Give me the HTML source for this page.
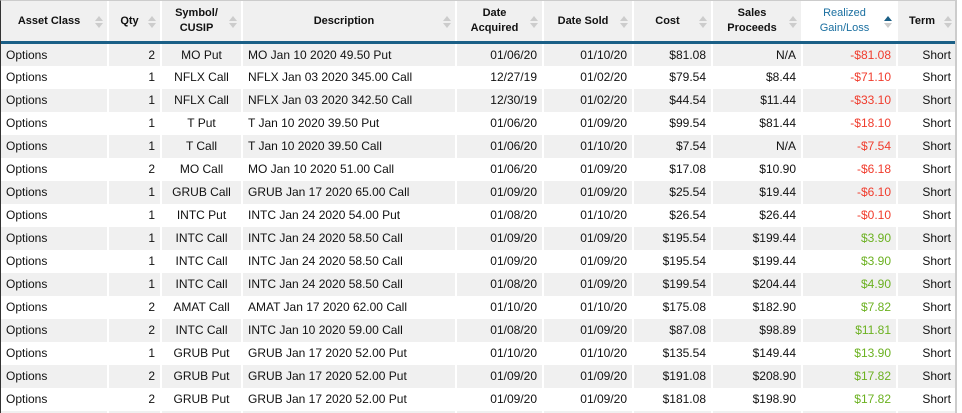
<!DOCTYPE html>
<html><head><style>
body{margin:0;background:#fff;font-family:"Liberation Sans",Arial,sans-serif;font-size:12px;color:#111}
.wrap{position:absolute;left:0;top:0;width:957px;height:413px;border-left:1px solid #333;border-top:1px solid #ccc;border-right:2px solid #ccc;overflow:hidden;box-sizing:border-box}
table{border-collapse:collapse;table-layout:fixed;width:956px}
th{background:#f0f0f0;height:40px;font-weight:bold;font-size:11px;line-height:15px;border-right:2px solid #fff;border-bottom:3px solid #1a5f86;position:relative;padding:0 14px 0 4px}
th.act{background:#fff;color:#1a6fa0;font-weight:normal}
th .s{position:absolute;right:8px;top:15px;width:0;height:0}
th .s:before{content:"";position:absolute;left:-4px;top:0;border:4px solid transparent;border-bottom:5px solid #ccc;border-top:0}
th .s:after{content:"";position:absolute;left:-4px;top:7px;border:4px solid transparent;border-top:5px solid #ccc;border-bottom:0}
th.act .s:before{border-bottom-color:#1a5f86}
td{height:23px;padding:0 5px;border-right:2px solid #fff;white-space:nowrap;box-sizing:border-box}
tr:nth-child(odd) td{background:#f0f0f0}
.r{text-align:right}.c{text-align:center}
.n{color:#f03b2c}.p{color:#6bb120}
</style></head><body><div class="wrap"><table>
<colgroup><col style="width:107px"><col style="width:53px"><col style="width:81px"><col style="width:214px"><col style="width:87px"><col style="width:90px"><col style="width:79px"><col style="width:90px"><col style="width:95px"><col style="width:60px"></colgroup>
<thead><tr>
<th>Asset Class<span class="s"></span></th><th>Qty<span class="s"></span></th><th>Symbol/<br>CUSIP<span class="s"></span></th><th>Description<span class="s"></span></th><th>Date<br>Acquired<span class="s"></span></th><th>Date Sold<span class="s"></span></th><th>Cost<span class="s"></span></th><th>Sales<br>Proceeds<span class="s"></span></th><th class="act">Realized<br>Gain/Loss<span class="s"></span></th><th>Term<span class="s"></span></th>
</tr></thead>
<tbody>
<tr><td>Options</td><td class="r">2</td><td class="c">MO Put</td><td>MO Jan 10 2020 49.50 Put</td><td class="r">01/06/20</td><td class="r">01/10/20</td><td class="r">$81.08</td><td class="r">N/A</td><td class="r n">-$81.08</td><td class="r">Short</td></tr>
<tr><td>Options</td><td class="r">1</td><td class="c">NFLX Call</td><td>NFLX Jan 03 2020 345.00 Call</td><td class="r">12/27/19</td><td class="r">01/02/20</td><td class="r">$79.54</td><td class="r">$8.44</td><td class="r n">-$71.10</td><td class="r">Short</td></tr>
<tr><td>Options</td><td class="r">1</td><td class="c">NFLX Call</td><td>NFLX Jan 03 2020 342.50 Call</td><td class="r">12/30/19</td><td class="r">01/02/20</td><td class="r">$44.54</td><td class="r">$11.44</td><td class="r n">-$33.10</td><td class="r">Short</td></tr>
<tr><td>Options</td><td class="r">1</td><td class="c">T Put</td><td>T Jan 10 2020 39.50 Put</td><td class="r">01/06/20</td><td class="r">01/09/20</td><td class="r">$99.54</td><td class="r">$81.44</td><td class="r n">-$18.10</td><td class="r">Short</td></tr>
<tr><td>Options</td><td class="r">1</td><td class="c">T Call</td><td>T Jan 10 2020 39.50 Call</td><td class="r">01/06/20</td><td class="r">01/10/20</td><td class="r">$7.54</td><td class="r">N/A</td><td class="r n">-$7.54</td><td class="r">Short</td></tr>
<tr><td>Options</td><td class="r">2</td><td class="c">MO Call</td><td>MO Jan 10 2020 51.00 Call</td><td class="r">01/06/20</td><td class="r">01/09/20</td><td class="r">$17.08</td><td class="r">$10.90</td><td class="r n">-$6.18</td><td class="r">Short</td></tr>
<tr><td>Options</td><td class="r">1</td><td class="c">GRUB Call</td><td>GRUB Jan 17 2020 65.00 Call</td><td class="r">01/09/20</td><td class="r">01/09/20</td><td class="r">$25.54</td><td class="r">$19.44</td><td class="r n">-$6.10</td><td class="r">Short</td></tr>
<tr><td>Options</td><td class="r">1</td><td class="c">INTC Put</td><td>INTC Jan 24 2020 54.00 Put</td><td class="r">01/08/20</td><td class="r">01/10/20</td><td class="r">$26.54</td><td class="r">$26.44</td><td class="r n">-$0.10</td><td class="r">Short</td></tr>
<tr><td>Options</td><td class="r">1</td><td class="c">INTC Call</td><td>INTC Jan 24 2020 58.50 Call</td><td class="r">01/09/20</td><td class="r">01/09/20</td><td class="r">$195.54</td><td class="r">$199.44</td><td class="r p">$3.90</td><td class="r">Short</td></tr>
<tr><td>Options</td><td class="r">1</td><td class="c">INTC Call</td><td>INTC Jan 24 2020 58.50 Call</td><td class="r">01/09/20</td><td class="r">01/09/20</td><td class="r">$195.54</td><td class="r">$199.44</td><td class="r p">$3.90</td><td class="r">Short</td></tr>
<tr><td>Options</td><td class="r">1</td><td class="c">INTC Call</td><td>INTC Jan 24 2020 58.50 Call</td><td class="r">01/08/20</td><td class="r">01/09/20</td><td class="r">$199.54</td><td class="r">$204.44</td><td class="r p">$4.90</td><td class="r">Short</td></tr>
<tr><td>Options</td><td class="r">2</td><td class="c">AMAT Call</td><td>AMAT Jan 17 2020 62.00 Call</td><td class="r">01/10/20</td><td class="r">01/10/20</td><td class="r">$175.08</td><td class="r">$182.90</td><td class="r p">$7.82</td><td class="r">Short</td></tr>
<tr><td>Options</td><td class="r">2</td><td class="c">INTC Call</td><td>INTC Jan 10 2020 59.00 Call</td><td class="r">01/08/20</td><td class="r">01/09/20</td><td class="r">$87.08</td><td class="r">$98.89</td><td class="r p">$11.81</td><td class="r">Short</td></tr>
<tr><td>Options</td><td class="r">1</td><td class="c">GRUB Put</td><td>GRUB Jan 17 2020 52.00 Put</td><td class="r">01/10/20</td><td class="r">01/10/20</td><td class="r">$135.54</td><td class="r">$149.44</td><td class="r p">$13.90</td><td class="r">Short</td></tr>
<tr><td>Options</td><td class="r">2</td><td class="c">GRUB Put</td><td>GRUB Jan 17 2020 52.00 Put</td><td class="r">01/09/20</td><td class="r">01/09/20</td><td class="r">$191.08</td><td class="r">$208.90</td><td class="r p">$17.82</td><td class="r">Short</td></tr>
<tr><td>Options</td><td class="r">2</td><td class="c">GRUB Put</td><td>GRUB Jan 17 2020 52.00 Put</td><td class="r">01/09/20</td><td class="r">01/09/20</td><td class="r">$181.08</td><td class="r">$198.90</td><td class="r p">$17.82</td><td class="r">Short</td></tr>
<tr><td>&nbsp;</td><td></td><td></td><td></td><td></td><td></td><td></td><td></td><td></td><td></td></tr>
</tbody></table></div></body></html>
